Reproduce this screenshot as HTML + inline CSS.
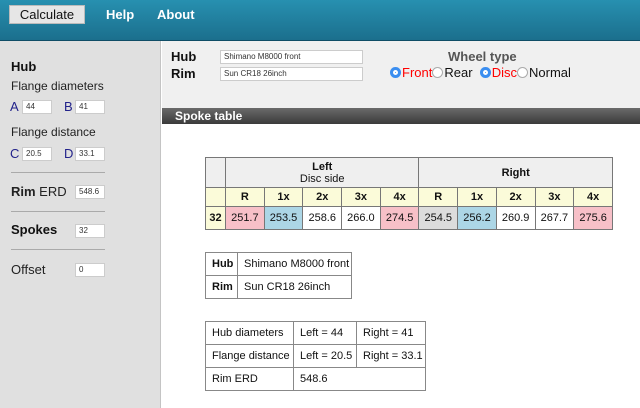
<!DOCTYPE html>
<html><head><style>
*{margin:0;padding:0;box-sizing:border-box}
body{width:640px;height:408px;overflow:hidden;font-family:"Liberation Sans",Arial,sans-serif;background:#fff;position:relative;color:#111}
.a{position:absolute;white-space:nowrap}
#hd{left:0;top:0;width:640px;height:41px;background:linear-gradient(#2790b0,#1b6f8d);border-bottom:1px solid #0f4d66}
.btn{left:9px;top:5px;width:76px;height:19px;background:#e6e6e6;border:1px solid #bbb;font-size:13px;text-align:center;line-height:17px;color:#111}
.nav{color:#fff;font-weight:bold;font-size:13px;top:7px}
#sb{left:0;top:41px;width:161px;height:367px;background:#e0e0e0;border-right:1px solid #c4c4c4}
#tp{left:162px;top:41px;width:478px;height:67px;background:#f0f0f0}
#bar{left:162px;top:108px;width:478px;height:16px;background:linear-gradient(#6a6a6a,#3a3a3a);color:#fff;font-weight:bold;font-size:12px;padding-left:13px;line-height:16px}
.inp{background:#fff;border:1px solid #ccc;font-size:8px;padding-left:3px;line-height:12px;height:14px;color:#333}
.lb{font-size:12px;color:#222}
.hr{left:11px;width:94px;height:1px;background:#aaa}
table{border-collapse:collapse;position:absolute;font-size:11px}
td{border:1px solid #777;text-align:center;padding:0}
.k td{border-color:#888;text-align:left;padding-left:6px}
.rad{display:inline-block;width:11px;height:11px;border-radius:50%;vertical-align:-1px;margin-right:1px}
.on{background:#3b8ef0;box-shadow:inset 0 0 0 3px #3b8ef0,inset 0 0 0 5px #fff}
.off{background:#fff;border:1px solid #aaa}
</style></head><body>
<div class="a" id="hd"></div>
<div class="a btn">Calculate</div>
<div class="a nav" style="left:106px">Help</div>
<div class="a nav" style="left:157px">About</div>

<div class="a" id="sb"></div>
<div class="a" style="left:11px;top:59px;font-weight:bold;font-size:13px">Hub</div>
<div class="a lb" style="left:11px;top:79px">Flange diameters</div>
<div class="a lb" style="left:10px;top:99px;color:#22228a;font-size:13px">A</div>
<div class="a inp" style="left:22px;top:100px;width:30px">44</div>
<div class="a lb" style="left:64px;top:99px;color:#22228a;font-size:13px">B</div>
<div class="a inp" style="left:75px;top:100px;width:30px">41</div>
<div class="a lb" style="left:11px;top:125px">Flange distance</div>
<div class="a lb" style="left:10px;top:146px;color:#22228a;font-size:13px">C</div>
<div class="a inp" style="left:22px;top:147px;width:30px">20.5</div>
<div class="a lb" style="left:64px;top:146px;color:#22228a;font-size:13px">D</div>
<div class="a inp" style="left:75px;top:147px;width:30px">33.1</div>
<div class="a hr" style="top:172px"></div>
<div class="a lb" style="left:11px;top:184px;font-size:13px"><b>Rim</b> ERD</div>
<div class="a inp" style="left:75px;top:185px;width:30px">548.6</div>
<div class="a hr" style="top:211px"></div>
<div class="a" style="left:11px;top:222px;font-weight:bold;font-size:13px">Spokes</div>
<div class="a inp" style="left:75px;top:224px;width:30px">32</div>
<div class="a hr" style="top:249px"></div>
<div class="a lb" style="left:11px;top:262px;font-size:13px">Offset</div>
<div class="a inp" style="left:75px;top:263px;width:30px">0</div>

<div class="a" id="tp"></div>
<div class="a" style="left:171px;top:49px;font-weight:bold;font-size:13px">Hub</div>
<div class="a" style="left:171px;top:66px;font-weight:bold;font-size:13px">Rim</div>
<div class="a inp" style="left:220px;top:50px;width:143px;height:14px">Shimano M8000 front</div>
<div class="a inp" style="left:220px;top:67px;width:143px;height:14px">Sun CR18 26inch</div>
<div class="a" style="left:448px;top:49px;font-weight:bold;font-size:13px;color:#555">Wheel type</div>
<div class="a" style="left:390px;top:65px;font-size:13px"><span class="rad on"></span><span style="color:#f00">Front</span><span class="rad off"></span>Rear &nbsp;<span class="rad on"></span><span style="color:#f00">Disc</span><span class="rad off"></span>Normal</div>
<div class="a" id="bar">Spoke table</div>

<table style="left:205px;top:157px;width:408px">
<tr style="height:30px;background:#efefef"><td style="width:20px"></td><td colspan="5"><b>Left</b><br>Disc side</td><td colspan="5"><b>Right</b></td></tr>
<tr style="height:19px;background:#fbfbd9;font-weight:bold"><td></td><td>R</td><td>1x</td><td>2x</td><td>3x</td><td>4x</td><td>R</td><td>1x</td><td>2x</td><td>3x</td><td>4x</td></tr>
<tr style="height:23px"><td style="background:#fbfbd9;font-weight:bold">32</td><td style="background:#f7c0c8">251.7</td><td style="background:#acd6e6">253.5</td><td>258.6</td><td>266.0</td><td style="background:#f7c0c8">274.5</td><td style="background:#dcdcdc">254.5</td><td style="background:#acd6e6">256.2</td><td>260.9</td><td>267.7</td><td style="background:#f7c0c8">275.6</td></tr>
</table>

<table class="k" style="left:205px;top:252px;width:147px">
<tr style="height:23px"><td style="width:32px;font-weight:bold">Hub</td><td>Shimano M8000 front</td></tr>
<tr style="height:23px"><td style="font-weight:bold">Rim</td><td>Sun CR18 26inch</td></tr>
</table>

<table class="k" style="left:205px;top:321px;width:221px">
<tr style="height:23px"><td style="width:88px">Hub diameters</td><td style="width:63px">Left = 44</td><td>Right = 41</td></tr>
<tr style="height:23px"><td>Flange distance</td><td>Left = 20.5</td><td>Right = 33.1</td></tr>
<tr style="height:23px"><td>Rim ERD</td><td colspan="2">548.6</td></tr>
</table>
</body></html>
